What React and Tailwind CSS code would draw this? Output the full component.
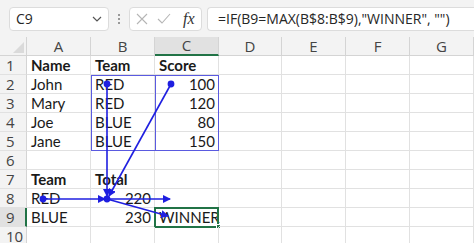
import React from 'react';

const cols = ['A', 'B', 'C', 'D', 'E', 'F', 'G'];

// cell data: [text, bold, align]
const rows = [
  [['Name', true], ['Team', true], ['Score', true]],
  [['John'], ['RED'], ['100', false, 'r']],
  [['Mary'], ['RED'], ['120', false, 'r']],
  [['Joe'], ['BLUE'], ['80', false, 'r']],
  [['Jane'], ['BLUE'], ['150', false, 'r']],
  [],
  [['Team', true], ['Total', true]],
  [['RED'], ['220', false, 'r']],
  [['BLUE'], ['230', false, 'r'], ['WINNER']],
  [],
];

const Cell = ({ cell, selected }) => {
  const [text, bold, align] = cell || [];
  return (
    <div
      className={`relative h-[19px] border-r border-b border-[#e1e1e1] flex items-center whitespace-nowrap text-[15px] text-[#1a1a1a] ${
        align === 'r' ? 'justify-end pr-[3px]' : 'pl-[4px]'
      } ${bold ? 'font-bold' : ''}`}
    >
      {text}
      {selected && (
        <>
          <div className="absolute -left-px -top-px w-[65px] h-[21px] border-2 border-[#217346]" />
          <div className="absolute -right-[3px] -bottom-[3px] w-[5px] h-[5px] bg-[#217346] border border-white" />
        </>
      )}
    </div>
  );
};

const TopBar = () => (
  <div className="h-[37px] bg-[#f3f3f3] flex items-center gap-0 pl-[9px] text-[14px] text-[#262626]" style={{ fontFamily: '"Open Sans", "Noto Sans", sans-serif' }}>
    <div className="w-[100px] h-[24px] bg-white border border-[#dcdcdc] rounded-[4px] flex items-center justify-between pl-[6px] pr-[6px]">
      <span>C9</span>
      <svg width="10" height="6" viewBox="0 0 10 6"><path d="M1 1l4 4 4-4" fill="none" stroke="#555" strokeWidth="1.2" /></svg>
    </div>
    <div className="w-[20px] flex flex-col items-center gap-[2px]">
      <div className="w-[2px] h-[2px] bg-[#999]" />
      <div className="w-[2px] h-[2px] bg-[#999]" />
      <div className="w-[2px] h-[2px] bg-[#999]" />
    </div>
    <div className="w-[73px] h-[24px] bg-white border border-[#dcdcdc] rounded-[4px] flex items-center pl-[6px] gap-[9px]">
      <svg width="12" height="12" viewBox="0 0 12 12"><path d="M1 1l10 10M11 1L1 11" stroke="#b5b5b5" strokeWidth="1.1" /></svg>
      <svg width="14" height="11" viewBox="0 0 14 11"><path d="M1 6l4 4 8-9" fill="none" stroke="#b5b5b5" strokeWidth="1.1" /></svg>
      <span className="italic text-[16px] text-[#333] ml-[3px]" style={{ fontFamily: '"Liberation Serif", serif' }}>fx</span>
    </div>
    <div className="ml-[5px] flex-1 h-[24px] bg-white border border-[#dcdcdc] border-r-0 rounded-l-[4px] flex items-center pl-[10px]">
      =IF(B9=MAX(B$8:B$9),"WINNER", "")
    </div>
  </div>
);

const Arrows = () => (
  <svg className="absolute left-0 top-0 pointer-events-none" width="474" height="243">
    <defs>
      <marker id="ah" markerWidth="8" markerHeight="8" refX="7" refY="4" orient="auto" markerUnits="userSpaceOnUse">
        <path d="M0 0L8 4L0 8z" fill="#1f1fe0" />
      </marker>
    </defs>
    {/* precedent boxes */}
    <rect x="91.5" y="75.5" width="64" height="75" fill="none" stroke="#5a5ae0" strokeWidth="1" />
    <rect x="155.5" y="75.5" width="63" height="75" fill="none" stroke="#5a5ae0" strokeWidth="1" />
    <g stroke="#1f1fe0" strokeWidth="1.6" fill="#1f1fe0">
      <circle cx="107" cy="84" r="2.6" />
      <circle cx="171" cy="84" r="2.6" />
      <circle cx="43" cy="199" r="2.6" />
      <circle cx="107" cy="199" r="2.6" />
      <line x1="107" y1="84" x2="107" y2="196" markerEnd="url(#ah)" />
      <line x1="171" y1="84" x2="109" y2="196" markerEnd="url(#ah)" />
      <line x1="43" y1="199" x2="105" y2="199" markerEnd="url(#ah)" />
      <line x1="107" y1="199" x2="170" y2="199" markerEnd="url(#ah)" />
      <line x1="107" y1="199" x2="168" y2="216" markerEnd="url(#ah)" />
    </g>
  </svg>
);

export default function App() {
  return (
    <div className="w-[474px] h-[243px] overflow-hidden bg-white relative">
      <TopBar />
      <div
        className="grid grid-cols-[27px_64px_64px_64px_63px_64px_64px_64px]"
        style={{ fontFamily: 'Lato, "Open Sans", sans-serif' }}
      >
        {/* header row */}
        <div className="h-[19px] bg-[#f3f3f3] border-r border-b border-[#d4d4d4] flex items-end justify-end p-[2px]">
          <div className="w-0 h-0 border-l-[11px] border-l-transparent border-b-[11px] border-b-[#dadada]" />
        </div>
        {cols.map((c) => (
          <div
            key={c}
            className={`h-[19px] flex items-center justify-center text-[15px] text-[#444] border-r border-[#d4d4d4] ${
              c === 'C' ? 'bg-[#e1e1e1] border-b-2 border-b-[#217346]' : 'bg-[#f3f3f3] border-b border-b-[#d4d4d4]'
            }`}
            style={{ fontFamily: '"Open Sans", sans-serif' }}
          >
            {c}
          </div>
        ))}
        {rows.map((r, i) => (
          <React.Fragment key={i}>
            <div
              className={`h-[19px] flex items-center pl-[6px] text-[15px] text-[#444] border-b border-[#e1e1e1] ${
                i === 8 ? 'bg-[#e1e1e1] border-r-2 border-r-[#217346]' : 'bg-[#f3f3f3] border-r border-r-[#d4d4d4]'
              }`}
              style={{ fontFamily: '"Open Sans", sans-serif' }}
            >
              {i + 1}
            </div>
            {cols.map((c, j) => (
              <Cell key={c} cell={r[j]} selected={i === 8 && j === 2} />
            ))}
          </React.Fragment>
        ))}
      </div>
      <Arrows />
    </div>
  );
}
